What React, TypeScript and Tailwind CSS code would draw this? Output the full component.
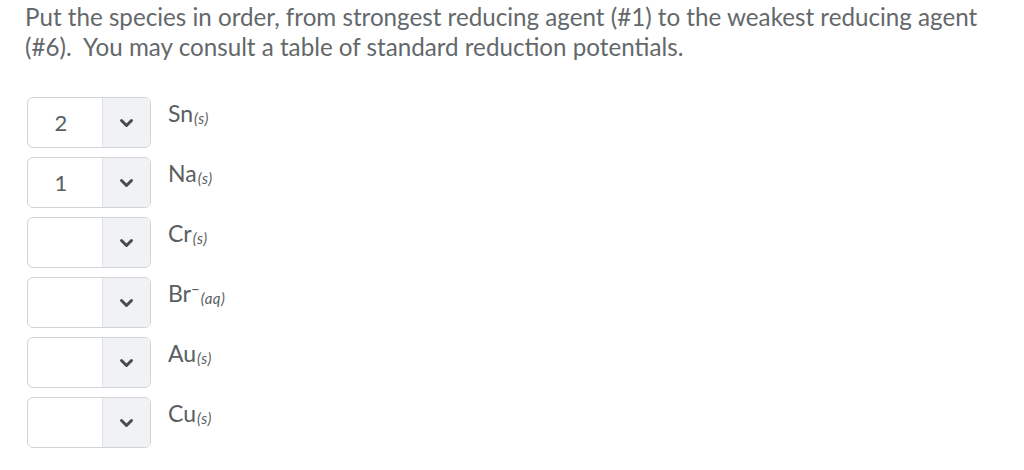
type Species = {
  symbol: string;
  charge?: string;
  phase: string;
  rank: string;
};

const species: Species[] = [
  { symbol: "Sn", phase: "(s)", rank: "2" },
  { symbol: "Na", phase: "(s)", rank: "1" },
  { symbol: "Cr", phase: "(s)", rank: "" },
  { symbol: "Br", charge: "\u2212", phase: "(aq)", rank: "" },
  { symbol: "Au", phase: "(s)", rank: "" },
  { symbol: "Cu", phase: "(s)", rank: "" },
];

// heavy down chevron used by the rank dropdowns
const Chevron = () => (
  <svg width="15" height="10" viewBox="0 0 15 10" fill="none">
    <path d="M2.5 2.5 L7.5 7.5 L12.5 2.5" stroke="#494c4e" strokeWidth="3" strokeLinecap="round" strokeLinejoin="round" />
  </svg>
);

const RankSelect = ({ value }: { value: string }) => (
  <div className="flex h-[51px] w-[124px] shrink-0 overflow-hidden rounded-[6px] border border-[#cfd3da] bg-white">
    <div className="flex w-[75px] items-center justify-center border-r border-[#dfe2e6] pr-[8px] text-[22px] text-[#5a5e61]">
      {value}
    </div>
    <div className="flex flex-1 items-center justify-center bg-[#f1f2f4]">
      <Chevron />
    </div>
  </div>
);

export default function App() {
  return (
    <div className="h-[470px] w-[1024px] bg-white font-['Lato',sans-serif] text-[#64686b]">
      <p className="pl-[25px] pr-4 pt-[2px] text-[24.2px] leading-[30px]">
        Put the species in order, from strongest reducing agent (#1) to the weakest reducing agent
        (#6).&nbsp; You may consult a table of standard reduction potentials.
      </p>

      <div className="mt-[35px] flex flex-col gap-[9px] pl-[27px]">
        {species.map((s) => (
          <div key={s.symbol} className="flex items-start gap-[17px]">
            <RankSelect value={s.rank} />
            <div className="pt-[1px] text-[23px] leading-[30px] text-[#5a5e61]">
              {s.symbol}
              {s.charge && <sup className="text-[15px]">{s.charge}</sup>}
              <span className="ml-[1px] inline-block align-[-2px] text-[15px] italic tracking-[0.5px]">{s.phase}</span>
            </div>
          </div>
        ))}
      </div>
    </div>
  );
}
